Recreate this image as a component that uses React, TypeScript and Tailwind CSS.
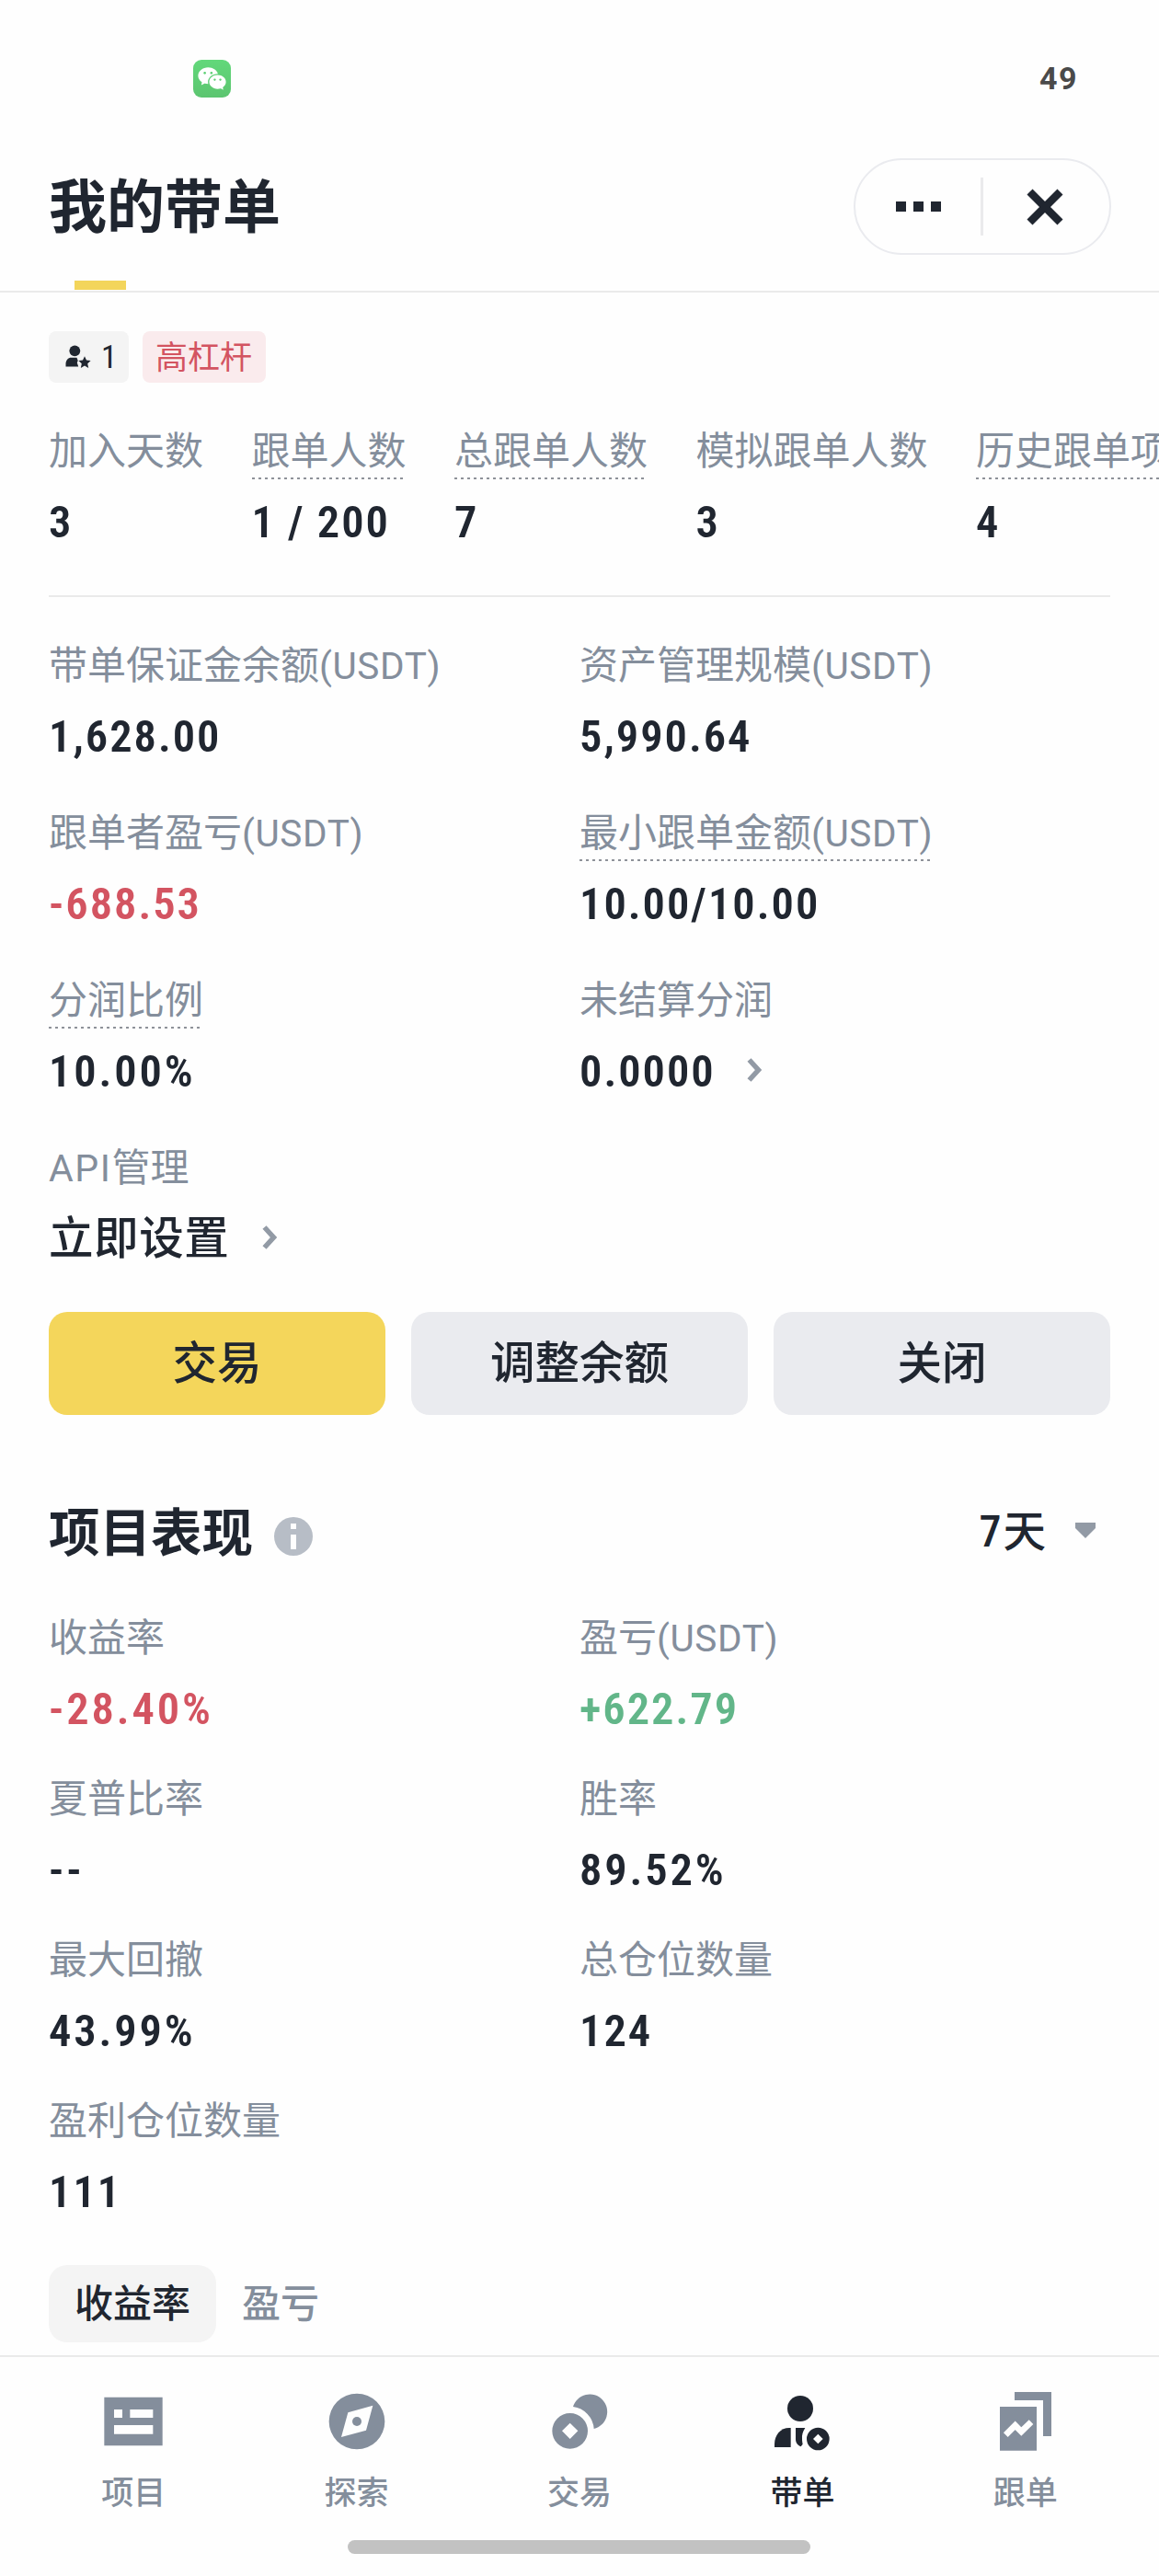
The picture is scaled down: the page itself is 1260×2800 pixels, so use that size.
import React, { useState } from 'react';
import { RiWechatFill } from 'react-icons/ri';

type StatType = {
  label: string,
  unit?: string,
  value: string,
  tone?: 'up' | 'down',
  dotted?: boolean,
  link?: boolean,
};

type IconProps = { className?: string };

const overview: StatType[] = [
  { label: '加入天数', value: '3' },
  { label: '跟单人数', value: '1 / 200', dotted: true },
  { label: '总跟单人数', value: '7', dotted: true },
  { label: '模拟跟单人数', value: '3' },
  { label: '历史跟单项目', value: '4', dotted: true },
];

const account: StatType[] = [
  { label: '带单保证金余额', unit: '(USDT)', value: '1,628.00' },
  { label: '资产管理规模', unit: '(USDT)', value: '5,990.64' },
  { label: '跟单者盈亏', unit: '(USDT)', value: '-688.53', tone: 'down' },
  { label: '最小跟单金额', unit: '(USDT)', value: '10.00/10.00', dotted: true },
  { label: '分润比例', value: '10.00%', dotted: true },
  { label: '未结算分润', value: '0.0000', link: true },
];

const performance: StatType[] = [
  { label: '收益率', value: '-28.40%', tone: 'down' },
  { label: '盈亏', unit: '(USDT)', value: '+622.79', tone: 'up' },
  { label: '夏普比率', value: '--' },
  { label: '胜率', value: '89.52%' },
  { label: '最大回撤', value: '43.99%' },
  { label: '总仓位数量', value: '124' },
  { label: '盈利仓位数量', value: '111' },
];

const ProjectIcon = ({ className }: IconProps) => (
  <svg viewBox="0 0 192 192" className={className} fill="currentColor">
    <path fillRule="evenodd" d="M1 17h190v158H1zM33 57v27h27V57zM85 57v27h75V57zM33 108v29h127v-29z" />
  </svg>
);

const ExploreIcon = ({ className }: IconProps) => (
  <svg viewBox="0 0 192 192" className={className} fill="currentColor">
    <path fillRule="evenodd" d="M96 5a91 91 0 1 0 0 182 91 91 0 0 0 0-182zM148 44l-22 81-81 22 22-80z" />
    <circle cx="96" cy="96" r="15" />
  </svg>
);

const TradeIcon = ({ className }: IconProps) => (
  <svg viewBox="0 0 192 192" className={className} fill="currentColor">
    <path d="M75 48A57 57 0 1 1 143 120A78 78 0 0 0 75 48z" />
    <path fillRule="evenodd" d="M65 69a58 58 0 1 0 0 116 58 58 0 0 0 0-116zM65 101l26 26-26 26-26-26z" />
  </svg>
);

const LeadIcon = ({ className }: IconProps) => (
  <svg viewBox="0 0 192 192" className={className} fill="currentColor">
    <circle cx="90" cy="54" r="42" />
    <path d="M6 180v-10c0-30 20-53 48-53h5v63z" />
    <path d="M75 117h31c-8 12-11 24-10 36 0 7 1 12 2 17l-6 8c-10-4-17-12-17-24z" />
    <path fillRule="evenodd" d="M148 116a37 37 0 1 0 0 74 37 37 0 0 0 0-74zM148 137l16 16-16 16-16-16z" />
  </svg>
);

const FollowIcon = ({ className }: IconProps) => (
  <svg viewBox="0 0 192 192" className={className} fill="currentColor">
    <path d="M60 0h120v144h-27V27H60z" />
    <path d="M12 48h120v143H12z" />
    <path d="M31 140l31-31 20 20 32-31" fill="none" stroke="#fefefe" strokeWidth="20" />
  </svg>
);

const UserStarIcon = ({ className }: IconProps) => (
  <svg viewBox="0 0 28 26" className={className} fill="currentColor">
    <circle cx="10.300" cy="6.300" r="5.900" />
    <path d="M0.500 23.500v-2.500c0-4.500 2.500-7.200 6-7.200h6l1.200 3.200-.9 2.200 1.400 4.300z" />
    <path d="M21 12.200l2 4.300 4.600.5-3.400 3.200 1 4.800-4.200-2.400-4.200 2.400 1-4.800-3.400-3.200 4.600-.5z" />
  </svg>
);

const Chevron = () => (
  <svg viewBox="0 0 18 28" className="mb-[4px] w-[18px] h-[28px] text-[#929aa5]">
    <path d="M2.500 3l10 11-10 11" fill="none" stroke="currentColor" strokeWidth="5.500" />
  </svg>
);

const tabs = [
  { label: '项目', Icon: ProjectIcon },
  { label: '探索', Icon: ExploreIcon },
  { label: '交易', Icon: TradeIcon },
  { label: '带单', Icon: LeadIcon },
  { label: '跟单', Icon: FollowIcon },
];

const toneColor = (tone?: 'up' | 'down') => {
  if (tone === 'up') return 'text-[#62b689]';
  if (tone === 'down') return 'text-[#d35461]';
  return 'text-[#202630]';
};

const tracking = (value: string) => (/%|--/.test(value) ? 'tracking-[2.9px]' : 'tracking-[2px]');

const Stat = ({
  label, unit, value, tone, dotted, link,
}: StatType) => (
  <div className="flex flex-col items-start gap-[17px] whitespace-nowrap">
    <div className={`h-[59px] leading-[58px] text-[42px] text-[#848e9c] ${dotted ? 'bg-[repeating-linear-gradient(90deg,#8e9299_0_3px,transparent_3px_7px)] bg-[length:100%_2px] bg-bottom bg-no-repeat' : ''}`}>
      {label}
      {unit && <span className="text-[40.5px] tracking-[0.6px]">{unit}</span>}
    </div>
    <div className={`flex items-center gap-[34px] h-[60px] leading-[60px] text-[48.5px] font-semibold [font-stretch:85%] ${tracking(value)} ${toneColor(tone)}`}>
      {value}
      {link && <Chevron />}
    </div>
  </div>
);

const App = () => {
  const [chart, setChart] = useState('收益率');
  const [tab, setTab] = useState('带单');

  return (
    <div className="w-[1260px] h-[2800px] overflow-hidden flex flex-col bg-[#fefefe] text-[#202630] font-[Roboto,'Noto_Sans_CJK_SC',sans-serif]">
      <div className="h-[172px] shrink-0 pt-[65px] pl-[210px] pr-[88px] flex justify-between items-start">
        <div className="size-[41px] rounded-[9px] bg-linear-to-b from-[#62d87a] to-[#5cc570] flex items-center justify-center">
          <RiWechatFill className="size-[33px] text-white" />
        </div>
        <span className="text-[34px] leading-[41px] font-bold tracking-[1.5px] text-[#4a4a4a]">49</span>
      </div>

      <header className="h-[146px] shrink-0 pl-[53px] pr-[52px] flex justify-between border-b-2 border-[#eaeaea]">
        <div className="flex flex-col justify-between">
          <h1 className="pt-px text-[63px] leading-[106px] font-bold">我的带单</h1>
          <div className="ml-7 mb-px w-14 h-[10px] bg-[#f3d55b]" />
        </div>
        <div className="w-[280px] h-[105px] rounded-full border-2 border-[#eaebef] flex items-center">
          <button type="button" className="w-[136px] flex gap-2 justify-center">
            <span className="size-[11px] bg-current" />
            <span className="size-[11px] bg-current" />
            <span className="size-[11px] bg-current" />
          </button>
          <div className="w-[3px] h-[63px] bg-[#eaeaec]" />
          <button type="button" className="w-[134px] flex justify-center">
            <svg viewBox="0 0 40 40" className="size-10">
              <path d="M3.500 3.500l33 33M36.500 3.500l-33 33" stroke="currentColor" strokeWidth="8.500" />
            </svg>
          </button>
        </div>
      </header>

      <main className="px-[53px] pt-[42px] h-[2242px] shrink-0">
        <div className="h-14 flex gap-[15px] text-[35px] leading-[59px]">
          <div className="w-[87px] h-14 pl-[18px] rounded-lg bg-[#f4f4f4] flex items-center">
            <UserStarIcon className="w-[28px] h-[26px] mr-[11px]" />
            <span className="[font-stretch:85%]">1</span>
          </div>
          <div className="pl-[14px] pr-[15px] h-14 rounded-lg bg-[#faebed] text-[#d35461]">高杠杆</div>
        </div>

        <div className="mt-[46px] flex gap-[52.5px]">
          {overview.map((stat) => <Stat key={stat.label} {...stat} />)}
        </div>

        <div className="mt-[49px] h-[2px] bg-[#eaeaea]" />

        <div className="mt-[46px] grid grid-cols-2 gap-y-[46px]">
          {account.map((stat) => <Stat key={stat.label} {...stat} />)}
          <div className="flex flex-col gap-[17px]">
            <div className="h-[59px] leading-[58px] text-[42px] text-[#848e9c]">
              <span className="text-[41px] tracking-[1.6px]">API</span>
              管理
            </div>
            <div className="flex items-center gap-[36px] h-[60px] leading-[60px] text-[48.5px] font-medium tracking-[0.6px]">
              立即设置
              <Chevron />
            </div>
          </div>
        </div>

        <div className="mt-[49px] flex gap-7 text-[48.5px] leading-[114px] font-medium">
          <button type="button" className="flex-1 h-28 rounded-[20px] bg-[#f4d65b]">交易</button>
          <button type="button" className="flex-1 h-28 rounded-[20px] bg-[#eaebef]">调整余额</button>
          <button type="button" className="flex-1 h-28 rounded-[20px] bg-[#eaebef]">关闭</button>
        </div>

        <div className="mt-[98px] h-16 flex">
          <h2 className="text-[55.5px] leading-[63px] font-bold">项目表现</h2>
          <svg viewBox="0 0 42 42" className="ml-[23px] mt-[13px] size-[42px]">
            <circle cx="21" cy="21" r="21" fill="#b7bdc6" />
            <path d="M18 7h6v6h-6zM18 19h6v16h-6z" fill="#fefefe" />
          </svg>
          <button type="button" className="ml-auto mr-[16px] h-[58px] flex items-center gap-[32px] text-[46.5px] leading-[58px] font-medium">
            <span>
              <span className="text-[48px] tracking-[2px] [font-stretch:85%]">7</span>
              天
            </span>
            <svg viewBox="0 0 22 17" className="mb-1 w-[22px] h-[17px]">
              <path d="M0 0h22v6L11 17 0 6z" fill="#929aa5" />
            </svg>
          </button>
        </div>

        <div className="mt-[52px] grid grid-cols-2 gap-y-[39px]">
          {performance.map((stat) => <Stat key={stat.label} {...stat} />)}
        </div>

        <div className="mt-[49px] flex text-[42px] leading-[86px] font-medium">
          {['收益率', '盈亏'].map((name) => (
            <button
              key={name}
              type="button"
              className={`px-7 h-[84px] rounded-[20px] ${chart === name ? 'bg-[#f4f4f4]' : 'text-[#848e9c]'}`}
              onClick={() => setChart(name)}
            >
              {name}
            </button>
          ))}
        </div>
      </main>

      <footer className="h-[240px] shrink-0 border-t-2 border-[#eaeaea] flex flex-col items-center">
        <nav className="w-full px-6 pt-[38px] grid grid-cols-5">
          {tabs.map(({ label, Icon }) => (
            <button
              key={label}
              type="button"
              className={`flex flex-col items-center ${tab === label ? 'text-[#202630]' : 'text-[#848e9c]'}`}
              onClick={() => setTab(label)}
            >
              <Icon className="size-16" />
              <span className="mt-[25px] text-[35px] leading-[44px] font-medium">{label}</span>
            </button>
          ))}
        </nav>
        <div className="mt-[28px] mr-0.5 w-[503px] h-[15px] rounded-full bg-[#c2c2c2]" />
      </footer>
    </div>
  );
};

export default App;
